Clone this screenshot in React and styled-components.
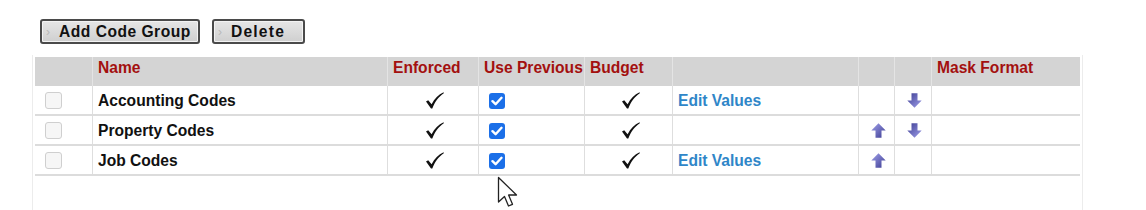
import React from "react";
import styled, { createGlobalStyle } from "styled-components";

const GlobalStyle = createGlobalStyle`
body {
  margin: 0;
  background: #fff;
  font-family: "Liberation Sans", Arial, sans-serif;
}
`;

const COLS = "58px 295px 91px 106px 88px 186px 36px 37px 148px";

const rows = [
  { name: "Accounting Codes", edit: true, up: false, down: true },
  { name: "Property Codes", edit: false, up: true, down: true },
  { name: "Job Codes", edit: true, up: true, down: false },
];

const CheckMark = () => (
  <svg width="19" height="17" viewBox="0 0 19 17">
    <path
      d="M1 9.5 L3.2 8.2 L6.6 12.2 C9.5 6.8 13.5 2.6 18.6 0.3 L18.8 1.2 C14.2 4.2 10 9.4 7.3 16.4 L6 16.6 Z"
      fill="#111"
    />
  </svg>
);

const Arrow = ({ dir }) => (
  <svg
    width="15"
    height="15"
    viewBox="0 0 14 14"
    style={dir === "down" ? { transform: "rotate(180deg)" } : undefined}
  >
    <defs>
      <linearGradient id={"ag" + dir} x1="0" y1="0" x2="1" y2="1">
        <stop offset="0" stopColor="#a0a0ea" />
        <stop offset="1" stopColor="#3c3c92" />
      </linearGradient>
    </defs>
    <path d="M7 0.3 L13.7 7 L9.8 7 L9.8 13.7 L4.2 13.7 L4.2 7 L0.3 7 Z" fill={`url(#ag${dir})`} />
  </svg>
);

const Cursor = () => (
  <svg width="22" height="34" viewBox="0 0 22 34">
    <path
      d="M1.5 1.5 L1.5 26 L7.5 20.5 L11.5 30 L15.5 28.3 L11.6 19 L19.5 19 Z"
      fill="#fff"
      stroke="#222"
      strokeWidth="1.3"
      strokeLinejoin="round"
    />
  </svg>
);

const App = () => {
  return (
    <Page>
      <GlobalStyle />
      <Toolbar>
        <ToolButton $w={160}>
          <Nub>›</Nub>Add Code Group
        </ToolButton>
        <ToolButton $w={93} $heavy>
          <Nub>›</Nub>Delete
        </ToolButton>
      </Toolbar>

      <Panel>
        <HeaderRow>
          <HeadCell />
          <HeadCell>Name</HeadCell>
          <HeadCell>Enforced</HeadCell>
          <HeadCell>Use Previous</HeadCell>
          <HeadCell>Budget</HeadCell>
          <HeadCell />
          <HeadCell />
          <HeadCell />
          <HeadCell $last>Mask Format</HeadCell>
        </HeaderRow>

        {rows.map((r) => (
          <BodyRow key={r.name}>
            <Cell>
              <PlainBox />
            </Cell>
            <Cell>{r.name}</Cell>
            <Cell $center>
              <CheckMark />
            </Cell>
            <Cell>
              <BlueBox>
                <svg width="12" height="10" viewBox="0 0 12 10">
                  <path d="M1.5 5.2 L4.6 8.2 L10.5 1.8" fill="none" stroke="#fff" strokeWidth="2.4" strokeLinecap="round" strokeLinejoin="round" />
                </svg>
              </BlueBox>
            </Cell>
            <Cell $center>
              <CheckMark />
            </Cell>
            <Cell>{r.edit && <EditLink>Edit Values</EditLink>}</Cell>
            <Cell $center>{r.up && <Arrow dir="up" />}</Cell>
            <Cell $center>{r.down && <Arrow dir="down" />}</Cell>
            <Cell $last />
          </BodyRow>
        ))}

        <Pointer>
          <Cursor />
        </Pointer>
      </Panel>
    </Page>
  );
};

const Page = styled.div`
width: 1146px;
height: 210px;
overflow: hidden;
`;

const Toolbar = styled.div`
display: flex;
gap: 12px;
padding: 19px 0 0 40px;
height: 25px;
`;

const ToolButton = styled.div`
box-sizing: border-box;
width: ${(p) => p.$w}px;
height: 25px;
display: flex;
align-items: center;
padding-left: 4px;
border: 2px solid #4a4a4a;
border-radius: 3px;
background: linear-gradient(#e6e6e6, #cfcfcf);
box-shadow: inset 0 0 0 1px #f3f3f3;
font-size: 15.6px;
font-weight: ${(p) => (p.$heavy ? 900 : 700)};
letter-spacing: ${(p) => (p.$heavy ? "1.2px" : "0.5px")};
color: #111;
`;

const Nub = styled.span`
color: #b8b8b8;
font-size: 12px;
font-weight: 400;
width: 13px;
letter-spacing: 0;
`;

const Panel = styled.div`
position: relative;
margin: 11px 0 0 32px;
width: 1051px;
box-sizing: border-box;
height: 160px;
padding: 2px 2px 0 2px;
border-left: 1px solid #ececec;
border-right: 1px solid #ececec;
`;

const HeaderRow = styled.div`
display: grid;
grid-template-columns: ${COLS};
height: 29px;
background: #d4d4d4;
`;

const HeadCell = styled.div`
box-sizing: border-box;
padding: 2px 0 0 5px;
border-right: ${(p) => (p.$last ? "none" : "1px solid #e4e4e4")};
color: #a3100f;
font-weight: 700;
font-size: 15.6px;
white-space: nowrap;
`;

const BodyRow = styled.div`
display: grid;
grid-template-columns: ${COLS};
height: 30px;
box-sizing: border-box;
border-bottom: 2px solid #dcdcdc;
`;

const Cell = styled.div`
box-sizing: border-box;
display: flex;
align-items: center;
justify-content: ${(p) => (p.$center ? "center" : "flex-start")};
padding-left: ${(p) => (p.$center ? "3px" : "5px")};
padding-top: 1px;
border-right: ${(p) => (p.$last ? "none" : "1px solid #dedede")};
font-weight: 700;
font-size: 15.6px;
color: #111;
white-space: nowrap;
`;

const PlainBox = styled.span`
box-sizing: border-box;
margin-left: 5px;
width: 17px;
height: 17px;
border: 1px solid #cfcfcf;
border-radius: 3px;
background: #f6f6f6;
`;

const BlueBox = styled.span`
margin-left: 5px;
width: 16px;
height: 16px;
border-radius: 3px;
background: #1b6fe8;
display: flex;
align-items: center;
justify-content: center;
`;

const EditLink = styled.span`
color: #2f86c8;
font-weight: 700;
`;

const Pointer = styled.div`
position: absolute;
left: 464px;
top: 121px;
`;

export default App;
